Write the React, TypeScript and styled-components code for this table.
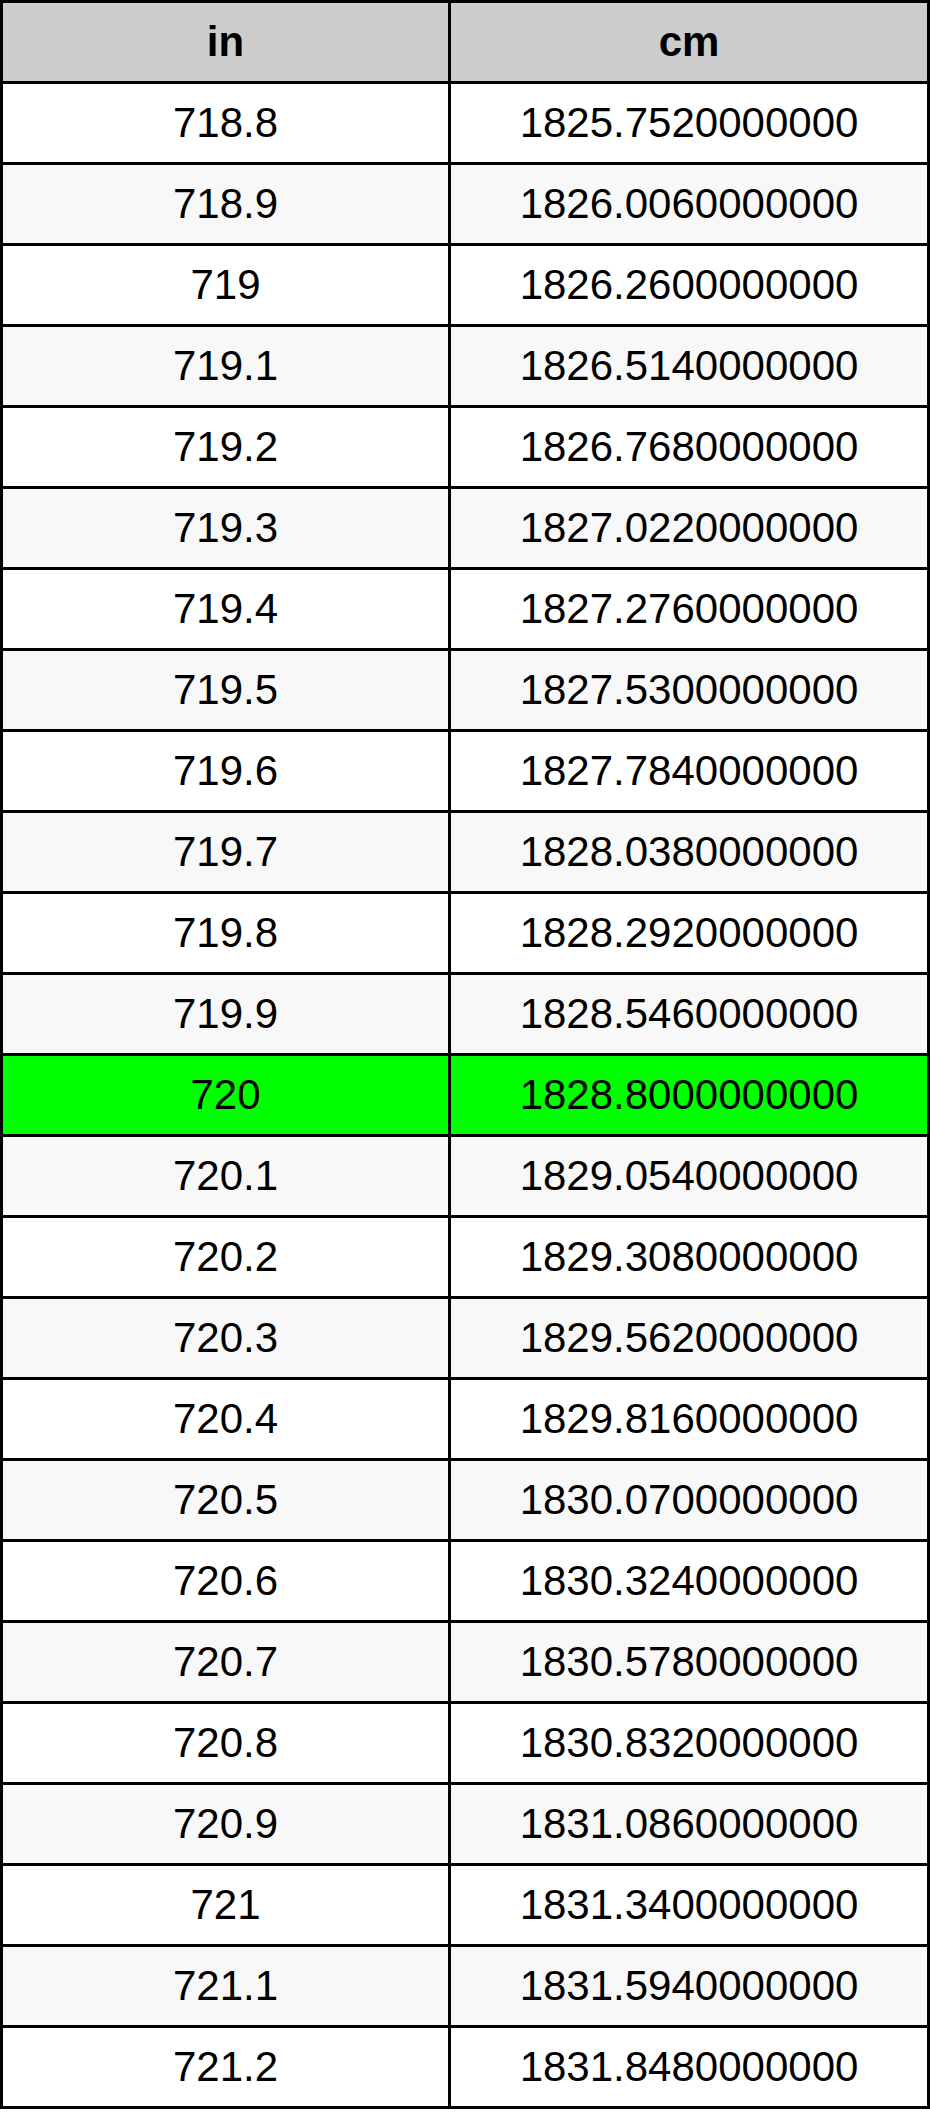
import React from "react";
import styled, { createGlobalStyle } from "styled-components";

const GlobalStyle = createGlobalStyle`
  html, body {
    margin: 0;
    padding: 0;
    background: #ffffff;
  }
  body {
    font-family: "Liberation Sans", Arial, sans-serif;
  }
`;

const Table = styled.div`
  display: grid;
  grid-template-columns: 448px 479px;
  width: 930px;
  border-top: 3px solid #000;
  border-left: 3px solid #000;
  box-sizing: border-box;
`;

const Cell = styled.div<{ $header?: boolean; $tone: "white" | "grey" | "green" | "head" }>`
  box-sizing: border-box;
  height: 81px;
  border-right: 3px solid #000;
  border-bottom: 3px solid #000;
  display: flex;
  align-items: center;
  justify-content: center;
  font-size: 42px;
  color: #000;
  font-weight: ${(p) => (p.$header ? 700 : 400)};
  background: ${(p) =>
    p.$tone === "head"
      ? "#cccccc"
      : p.$tone === "green"
      ? "#00ff00"
      : p.$tone === "grey"
      ? "#f8f8f8"
      : "#ffffff"};
`;

const rows: [string, string][] = [
  ["718.8", "1825.7520000000"],
  ["718.9", "1826.0060000000"],
  ["719", "1826.2600000000"],
  ["719.1", "1826.5140000000"],
  ["719.2", "1826.7680000000"],
  ["719.3", "1827.0220000000"],
  ["719.4", "1827.2760000000"],
  ["719.5", "1827.5300000000"],
  ["719.6", "1827.7840000000"],
  ["719.7", "1828.0380000000"],
  ["719.8", "1828.2920000000"],
  ["719.9", "1828.5460000000"],
  ["720", "1828.8000000000"],
  ["720.1", "1829.0540000000"],
  ["720.2", "1829.3080000000"],
  ["720.3", "1829.5620000000"],
  ["720.4", "1829.8160000000"],
  ["720.5", "1830.0700000000"],
  ["720.6", "1830.3240000000"],
  ["720.7", "1830.5780000000"],
  ["720.8", "1830.8320000000"],
  ["720.9", "1831.0860000000"],
  ["721", "1831.3400000000"],
  ["721.1", "1831.5940000000"],
  ["721.2", "1831.8480000000"],
];

const App = () => {
  return (
    <>
      <GlobalStyle />
      <Table>
        <Cell $header $tone="head">in</Cell>
        <Cell $header $tone="head">cm</Cell>
        {rows.map(([inch, cm], i) => {
          const tone = inch === "720" ? "green" : i % 2 === 1 ? "grey" : "white";
          return (
            <React.Fragment key={inch}>
              <Cell $tone={tone}>{inch}</Cell>
              <Cell $tone={tone}>{cm}</Cell>
            </React.Fragment>
          );
        })}
      </Table>
    </>
  );
};

export default App;
